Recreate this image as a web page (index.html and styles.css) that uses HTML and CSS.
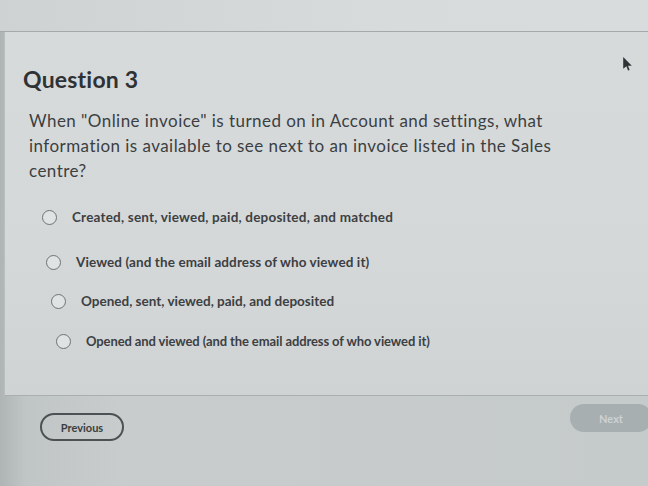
FILE: index.html
```html
<!DOCTYPE html>
<html>
<head>
<meta charset="utf-8">
<link rel="stylesheet" href="styles.css">
</head>
<body>
<div class="page">
  <div class="topband"></div>
  <div class="card">
    <h2 class="title">Question 3</h2>
    <p class="question">When "Online invoice" is turned on in Account and settings, what information is available to see next to an invoice listed in the Sales centre?</p>
    <ul class="options">
      <li class="option o1"><span class="radio"></span><span>Created, sent, viewed, paid, deposited, and matched</span></li>
      <li class="option o2"><span class="radio"></span><span>Viewed (and the email address of who viewed it)</span></li>
      <li class="option o3"><span class="radio"></span><span>Opened, sent, viewed, paid, and deposited</span></li>
      <li class="option o4"><span class="radio"></span><span>Opened and viewed (and the email address of who viewed it)</span></li>
    </ul>
  </div>
  <div class="nav">
    <button class="btn prev">Previous</button>
    <button class="btn next">Next</button>
  </div>
  <svg class="cursor" width="13" height="15" viewBox="0 0 12 14"><path d="M2 1 L10 9 L6.5 9 L8 13 L6.5 13.5 L5 9.6 L2 12 Z" fill="#2f3336"/></svg>
</div>
</body>
</html>
```

FILE: styles.css
```css
* { box-sizing: border-box; }
html, body { margin: 0; padding: 0; }
body {
  width: 648px;
  height: 486px;
  overflow: hidden;
  font-family: Lato, "Open Sans", sans-serif;
  color: #35393c;
  background: linear-gradient(90deg, #afb4b5 0px, #c0c5c5 26px, #c8cccc 120px, #c5caca 648px);
}
.page { position: relative; height: 486px; }
.topband {
  height: 32px;
  background: linear-gradient(90deg, #cfd2d3, #d8dbdc 60%, #d9dcdc);
  border-bottom: 1px solid #a4a9ab;
}
.card {
  margin-left: 4px;
  height: 364px;
  background: linear-gradient(180deg, #d7dadb 0%, #d5d8d9 60%, #cfd3d3 100%);
  border-left: 1px solid #b9bdbe;
  border-bottom: 1px solid #a9aeaf;
  padding: 33px 0 0 18px;
}
.title {
  margin: 0;
  font-size: 23px;
  font-weight: 700;
  color: #2f3235;
  letter-spacing: 0.2px;
}
.question {
  margin: 15px 0 0 6px;
  width: 545px;
  font-size: 17px;
  line-height: 25px;
  letter-spacing: 0.45px;
  color: #3b3f42;
}
.options {
  list-style: none;
  margin: 24px 0 0 0;
  padding: 0;
}
.option {
  display: flex;
  align-items: center;
  gap: 15px;
  font-size: 13.5px;
  letter-spacing: 0.2px;
  font-weight: 700;
  color: #3c4043;
  height: 20px;
}
.o1 { margin-left: 19px; }
.o2 { margin-left: 23px; margin-top: 25px; letter-spacing: 0.1px; }
.o3 { margin-left: 28px; margin-top: 19px; letter-spacing: 0; }
.o4 { margin-left: 33px; margin-top: 20px; letter-spacing: -0.1px; font-size: 13px; }
.radio {
  width: 15px;
  height: 15px;
  border: 1.5px solid #6d7275;
  border-radius: 50%;
  background: #e0e3e4;
  flex: none;
}
.nav {
  display: flex;
  justify-content: space-between;
  align-items: flex-start;
  padding: 8px 0 0 40px;
}
.btn {
  font-family: Lato, "Open Sans", sans-serif;
  font-weight: 700;
  font-size: 11px;
  border-radius: 15px;
  height: 28px;
}
.prev {
  margin-top: 9px;
  width: 84px;
  border: 2px solid #4c5154;
  background: transparent;
  color: #3a3e41;
}
.next {
  width: 82px;
  border: none;
  background: #a8afb0;
  color: #cdd2d3;
  margin-right: -4px;
}
.cursor { position: absolute; left: 621px; top: 56px; }
```
